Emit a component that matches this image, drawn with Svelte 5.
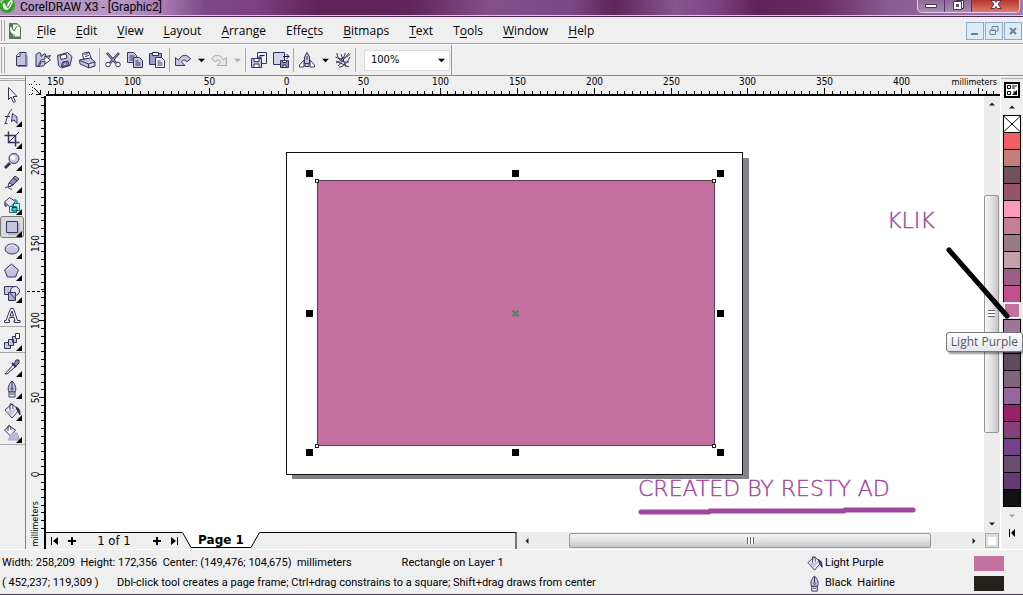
<script lang="ts">
	// all icons are drawn on an 18x18 grid; fill and stroke come from .icon
	const icons: Record<string, string> = {
		new: '<path d="M4.500 4.500 8 1.500h6v13h-9.500z"/><path d="M8 1.500v4H4.500" fill="#fff"/><path d="M6 15.500h9v-11" fill="none" stroke="#77779c"/>',
		open: '<path d="M2 15.500V3.500l3-2 2 1v3l4-3 1 3 4.500-1-7 10.500z"/><path d="m4 15 3-6 4-1V5l5.500 4-5.500 4v-3l-4 1-2 5z" fill="#fff"/>',
		save: '<path d="m1.500 4.500 10-3 4.500 4-2 9-8.500 2.500-3-2.500z"/><path d="m4 4.500 1 4 6-1.500-1-4z" fill="#fff"/><path d="m5.500 15.500 1-4.500 5.500-1 1 4.500z" fill="#77779c"/><path d="M9 12.500v1.500" stroke="#fff"/>',
		print: '<path d="m5.500 8-1-5.500L11 1l2.500 7z" fill="#fff"/><path d="m1.500 9 11-2 4.500 4v4l-6 2-9-4z"/><path d="m2 9.500 8.500 3.500 6-2M10.500 13v4" fill="none"/><path d="m6.500 3.500 4-1m-3.500 3 4-1" fill="none"/><path d="m12 14 3-1" stroke="#fff"/>',
		cut: '<path d="m3 2 9 10M15 2 6 12" fill="none" stroke-width="2.600"/><path d="m3.500 2.500 8 9M14.500 2.500l-8 9" fill="none" stroke="#dcdcf0" stroke-width=".7"/><circle cx="4" cy="13.500" r="2.300" fill="#fff"/><circle cx="14" cy="13.500" r="2.300" fill="#fff"/>',
		copy: '<path d="M1.500 1.500h6l3 3v7h-9z"/><path d="M3.500 5h5m-5 2h5m-5 2h5"/><path d="M7.500 6.500h6l3 3v7h-9z"/><path d="M9.500 10h3m-3 2h5m-5 2h5"/>',
		paste: '<path d="M1.500 2.500h12v11h-12z" fill="#9c9cc6"/><path d="M4.500 1.500h6v3h-6z" fill="#fff"/><path d="M7.500 6.500h6l3 3v7h-9z" fill="#f1f1fb"/><path d="M9.500 10h3m-3 2h5m-5 2h5"/>',
		undo: '<path d="M1.500 14.500V6.500l3 2.500c3-6 9-6 12-1l-4 3c-1-3-4-2-5 0l3.500 3.500z"/>',
		redo: '<path d="M16.500 14.500V6.500l-3 2.500c-3-6-9-6-12-1l4 3c1-3 4-2 5 0L7 14.500z" fill="#e6e6e6" stroke="#aaa"/>',
		import: '<path d="M7.500 1.500h9v11h-9z" fill="#f1f1fb"/><path d="M1.500 7.500h10v9h-10z"/><path d="M4 7.500h5v3H4zM4 13h5v3.500H4z" fill="#fff"/><path d="M14.500 4.500H10v2.500M8 5.500l2 2 2-2" fill="none" stroke="#171733"/>',
		export: '<path d="M1.500 1.500h11v12h-11z" fill="#d4d4ec"/><path d="M8.500 9.500h8v7h-8z" fill="#8f8fb8"/><path d="M10.500 9.500h4v2h-4zM11 14h3v2.500h-3z" fill="#fff"/><path d="M11 5.500h6M14.500 3l2.500 2.500L14.500 8" fill="none" stroke="#171733"/>',
		launch: '<path d="M6.500 12.500V6L9 1.500 11.500 6v6.500z"/><path d="m6 9-4.500 5v2H6zm6 0 4.500 5v2H12z" fill="#fff"/><path d="M7 12.500h4v3H7zM9 5v4"/>',
		online: '<path d="M3 2c0 6 5 10 12 9M1.500 6c5 3 9 2 15-3M2 12c5-2 9-6 9-10M5 16c5 0 8-4 11-10M2 10l13 6M7 3l5 13M15 2 4 15" fill="none"/>',
		pick: '<path d="M5.500 1.500v12l2.500-2.500 2.500 5.500 2-1-2.500-5h4z" fill="#f1f1fb"/>',
		shape: '<path d="M9 1C6 4 4 9 2.500 15" fill="none"/><path d="M2 8.500h5m-5.500 7h3" fill="none"/><path d="m9.500 5.500-1 8 2.500-1.500 3 3.500V9z"/>',
		crop: '<path d="M5.500 1.500v11h11M1.500 5.500h11v11" fill="none" stroke-width="1.500"/><path d="M16 2 5 13" fill="none"/>',
		zoom: '<path d="m7 11-5 5" stroke-width="3"/><circle cx="11" cy="6.500" r="5"/><circle cx="10" cy="5.500" r="2.500" fill="#fff" stroke="none"/>',
		freehand: '<path d="m6 9 6-7 4 3-6 6-4 2z" fill="#8f8fb8"/><path d="m6 9 4 2-5 2zM2 14c3-3 4 2 7 1" fill="#fff"/><path d="m10 4 4 3" fill="none"/>',
		smart: '<path d="m1.500 6 5-4.500 6 4-5 6z" fill="#e4e4f2"/><path d="M2 7c-1 3 1 5 2 2" fill="#77779c"/><path d="M11 4c2 0 3 1 3 3" fill="none" stroke="#15a9b0" stroke-width="2"/><path d="M6.500 10.500h7v6h-7zM10.500 7.500h6v7h-6z" fill="#c5f3f2" stroke="#087b82"/><path d="M9 11.500h5v3.500H9z" fill="#15d7e0" stroke="#333"/>',
		rectangle: '<path d="M3.500 3.500h11v11h-11z"/><path d="M16 5v11H5" fill="none" stroke="#9999aa"/>',
		ellipse: '<ellipse cx="9" cy="9" rx="7" ry="5"/><path d="M4 8c2-4 8-4 9 0" fill="none" stroke="#fff"/>',
		polygon: '<path d="m8.500 2 7 6-3 7h-8l-3-7z"/><path d="m3.500 8 5-4" stroke="#fff"/>',
		shapes: '<path d="M1.500 2.500h9v8h-9z"/><circle cx="12" cy="7" r="4.500" fill="#e6e6f5"/><path d="M5.500 8.500h7v8h-7z" fill="#b0b1d1"/><path d="m6 8 7 8" fill="none"/>',
		text: '<path d="M7.500 2.500h3l4 12H17v2h-6v-2h1l-1-3H6.500l-1 3h1v2h-5v-2H3zM9 5l-2 5h3.500z" fill="#f4f4fb" fill-rule="evenodd"/>',
		blend: '<path d="M1.500 10.500h6v6h-6z"/><path d="M5.500 7.500h5v6h-5zM9.500 4.500h4v6h-4z"/><path d="M12.500 1.500h4v5h-4z" fill="#fff"/>',
		eyedropper: '<path d="m2 16 8-9 2 2-8 7z" fill="#f1f1fb"/><path d="m9 5 4 4" stroke-width="2"/><path d="m11 6 2-4h3v3l-3 3z" fill="#8585b0"/>',
		outline: '<path d="M6 12C4 8 6 4 9 1c3 3 5 7 3 11z"/><path d="M9 2v7m-3 3h6v5H6zm1 2h4" fill="#f1f1fb"/><circle cx="9" cy="9" r="1" fill="#fff"/>',
		fill: '<path d="m2 8 7-6 7 6-7 8z" fill="#f1f1fb"/><path d="m3 9 11-2-6 7z" stroke="none"/><path d="M7 8V2c2-1 3 1 3 5" fill="none"/><path d="M13 5c4 1 4 5 4 8l-3-5z" fill="#35345c"/>',
		interactive: '<path d="m1.500 6 5-4 6 4-5 6z" fill="#f1f1fb"/><path d="M5 7V2c2-2 3 1 3 4" fill="none"/><path d="m5 16 4-7h5l3 7z" fill="#b9b9df" stroke="#a5a5cc"/>'
	};

	// [before, access key, after]
	const menus = [
		['', 'F', 'ile'],
		['', 'E', 'dit'],
		['', 'V', 'iew'],
		['', 'L', 'ayout'],
		['', 'A', 'rrange'],
		['Effe', 'c', 'ts'],
		['', 'B', 'itmaps'],
		['', 'T', 'ext'],
		['T', 'o', 'ols'],
		['', 'W', 'indow'],
		['', 'H', 'elp']
	];

	const toolbar = [
		['new', 'open', 'save', 'print'],
		['cut', 'copy', 'paste'],
		['undo', 'caret', 'redo', 'caret-off'],
		['import', 'export'],
		['launch', 'caret', 'online']
	];

	const toolbox = [
		['pick', 'shape', 'crop', 'zoom', 'freehand', 'smart', 'rectangle', 'ellipse', 'polygon', 'shapes', 'text'],
		['blend'],
		['eyedropper', 'outline', 'fill', 'interactive']
	];

	const palette = [
		'#f05f62', '#c47f7b', '#74505c', '#98536b', '#fd9abb', '#c67d98', '#957c86', '#c59fab',
		'#9d5e86', '#c44f8c', '#c36f9f', '#9d7798', '#7b5f79', '#5f4c5e', '#80667c', '#98659f',
		'#9a206c', '#85407a', '#76418c', '#694d6d', '#623a75', '#121215'
	];

	// ruler: one tick per 5 mm, labels every 50 mm
	const TICK = 7.69;
	const hTicks = Array.from({ length: 200 }, (_, i) => i - 31);
	const vTicks = Array.from({ length: 60 }, (_, i) => i - 7);
	const hOrigin = 240;
	const vOrigin = 378;

	let tool = $state('rectangle');
	let color = $state(10);
</script>

{#snippet icon(name: string)}
	<svg class="icon" viewBox="0 0 18 18" aria-hidden="true">{@html icons[name]}</svg>
{/snippet}

{#snippet arrow(dir: string)}
	<svg class="arrow {dir}" viewBox="0 0 8 8" aria-hidden="true"><path d="M0 6h8L4 2z" /></svg>
{/snippet}

<div class="app">
	<header class="title">
		<svg class="logo" viewBox="0 0 18 15" aria-hidden="true">
			<circle cx="7" cy="5" r="8" fill="#39a02c" />
			<path d="M1 3a6 6 0 0 1 11-2" fill="none" stroke="#a5dc87" stroke-width="2" />
			<path d="M3 3c2 0 3 2 4 4 0-3 1-5 4-7l2 2c-2 3-2 6-6 8-3 0-5-3-4-7z" fill="#fff" />
			<path d="m5 4 3 4 3-6" fill="none" stroke="#39962c" />
		</svg>
		<h1>CorelDRAW X3 - [Graphic2]</h1>
		<div class="window-buttons">
			<button aria-label="Minimize"><svg viewBox="0 0 14 12"><path d="M1.500 4.500h11v3h-11z" /></svg></button>
			<button aria-label="Restore"><svg viewBox="0 0 14 12"><path d="M4.500.5h8v8h-2" /><path d="M2.500 1.500h8v8h-8zM5.500 4.500h2v2h-2z" fill-rule="evenodd" /></svg></button>
			<button class="close" aria-label="Close"><svg viewBox="0 0 14 12"><path d="M2 .5h3.500L7 2.500 8.500.5H12L9 4l3 4.500H8.500L7 6.500l-1.500 2H2L5 4z" /></svg></button>
		</div>
	</header>

	<nav class="menu" aria-label="Main menu">
		<span class="grip"></span>
		<svg class="doc" viewBox="0 0 14 18" aria-hidden="true">
			<path d="M1 1h8l4 4v12H1z" fill="#4f7f4a" />
			<path d="M5 2.500h4l3 3v9H5z" fill="#f7fbf2" />
			<path d="M2 5c2 0 2 2 3 3 0-2 1-4 3-5l2 2c-2 3-2 5-3 7-3 1-5-2-5-7z" fill="#fff" />
			<path d="m4 6 2 3 3-5M6 12v3" fill="none" stroke="#4f7f4a" />
		</svg>
		{#each menus as [before, key, after]}
			<button class="menu-item">{before}<u>{key}</u>{after}</button>
		{/each}
		<div class="mdi">
			<button aria-label="Minimize document"><svg viewBox="0 0 16 16"><path d="M4 11h7" stroke-width="2" /></svg></button>
			<button aria-label="Restore document"><svg viewBox="0 0 16 16"><path d="M6 6V3.500h6V8h-2M6 3.500h6M4 7.500h5.500v4H4zM4 7h5.500" /></svg></button>
			<button aria-label="Close document"><svg viewBox="0 0 16 16"><path d="m5 5 6 6m0-6-6 6" stroke-width="2" /></svg></button>
		</div>
	</nav>

	<div class="toolbar" role="toolbar" aria-label="Standard">
		<span class="grip"></span>
		{#each toolbar as group}
			<div class="group">
				{#each group as name}
					{#if name.startsWith('caret')}
						<button class="caret" class:off={name === 'caret-off'} aria-label="More">{@render arrow('down')}</button>
					{:else}
						<button class="tool" aria-label={name}>{@render icon(name)}</button>
					{/if}
				{/each}
			</div>
		{/each}
		<label class="zoom">
			<select aria-label="Zoom level">
				<option>100%</option>
				<option>200%</option>
			</select>
			{@render arrow('down')}
		</label>
	</div>

	<main>
		<aside class="toolbox" aria-label="Toolbox">
			{#each toolbox as group}
				<div class="tools">
					{#each group as name}
						<button class="tool" class:active={tool === name} class:flyout={name !== 'pick' && name !== 'text'} aria-label={name} onclick={() => (tool = name)}>
							{@render icon(name)}
						</button>
					{/each}
				</div>
			{/each}
		</aside>

		<section class="document" aria-label="Graphic2">
			<svg class="corner" aria-hidden="true">
				<path d="M6 11v1m0 2v1m0 2v1M10 8h1m2 0h1m-6 4 6 6m0-4v4h-4M3 8h1m1 0h1M3 18h1m1 0h1M8 5v1" />
			</svg>
			<svg class="ruler-h">
				{#each hTicks as t}
					{@const x = Math.round(hOrigin + t * TICK) + 0.5}
					<path d="M{x} {t % 10 === 0 ? 12 : 15}V18" />
					{#if t % 10 === 0 && t < 90}
						<text {x} y="9">{Math.abs(t * 5)}</text>
					{/if}
				{/each}
				<path d="M936 5v12" stroke-dasharray="2 2" />
			</svg>
			<span class="unit-h">millimeters</span>
			<svg class="ruler-v">
				{#each vTicks as t}
					{@const y = Math.round(vOrigin - t * TICK) + 0.5}
					<path d="M{t % 10 === 0 ? 13 : 15} {y}H19" />
					{#if t % 10 === 0 && t < 50}
						<text transform="translate(13 {y}) rotate(-90)">{Math.abs(t * 5)}</text>
					{/if}
				{/each}
				<path d="M1 195.500h18" stroke-dasharray="3 2" />
			</svg>
			<span class="unit-v">millimeters</span>

			<svg class="canvas" role="img" aria-label="Page with a light purple rectangle">
				<rect x="246" y="62" width="457" height="321" fill="#808489" />
				<rect x="240.500" y="56.500" width="456" height="322" fill="#fff" stroke="#111" />
				<rect x="271.500" y="84.500" width="397" height="265" fill={palette[10]} stroke="#5b3f50" />
				{#each [271, 668] as x}
					{#each [84, 349] as y}
						<rect x={x - 1.5} y={y - 0.5} width="3" height="3" fill="#fff" stroke="#222" />
					{/each}
				{/each}
				{#each [260, 466, 671] as x}
					{#each [74, 214, 353] as y}
						{#if x !== 466 || y !== 214}
							<rect {x} {y} width="7" height="7" />
						{/if}
					{/each}
				{/each}
				<path d="m466.500 214.500 6 6m0-6-6 6" stroke="#3d8b63" stroke-width="2" />
				<text x="592" y="400">CREATED BY RESTY AD</text>
				<path class="underline" d="M595 416h68l1-1h134l1-1h68" />
			</svg>

			<div class="scroll vertical">
				<button aria-label="Scroll up">{@render arrow('up')}</button>
				<span class="thumb"></span>
				<button aria-label="Scroll down">{@render arrow('down')}</button>
			</div>

			<div class="bottom">
				<div class="pages">
					<button aria-label="First page"><svg viewBox="0 0 10 10"><path d="M1 1h1v8H1zM8 1v8L3 5z" /></svg></button>
					<button aria-label="Add page before"><svg viewBox="0 0 10 10"><path d="M4 1h2v3h3v2H6v3H4V6H1V4h3z" /></svg></button>
					<span class="count">1 of 1</span>
					<button aria-label="Add page after"><svg viewBox="0 0 10 10"><path d="M4 1h2v3h3v2H6v3H4V6H1V4h3z" /></svg></button>
					<button aria-label="Last page"><svg viewBox="0 0 10 10"><path d="M8 1h1v8H8zM2 1v8l5-4z" /></svg></button>
					<button class="tab">
						<svg viewBox="0 0 78 17" aria-hidden="true"><path d="M0 0h78v1h-1l-8 14.500H9L1 1H0z" fill="#fff" stroke="none" /><path d="M.5.5 9 15.500h60L77.500.5" fill="none" stroke="#000" /></svg>
						<span>Page 1</span>
					</button>
				</div>
				<div class="scroll horizontal">
					<button aria-label="Scroll left">{@render arrow('left')}</button>
					<span class="thumb"></span>
					<button aria-label="Scroll right">{@render arrow('right')}</button>
				</div>
			</div>
			<button class="navigator" aria-label="Navigator"></button>
		</section>

		<aside class="palette" aria-label="Color palette">
			<button class="palette-menu" aria-label="Palette options">
				<svg viewBox="0 0 16 16"><path d="M1 1h14v14H1z" fill="#fff" stroke-width="2" /><path d="M3.500 3.500h3v3h-3zM3.500 9.500h3v3h-3zM8 4h5M8 6h3M9 10h3" fill="none" /><path d="M13 8v5H8z" fill="#000" stroke="none" /></svg>
			</button>
			<button class="step" aria-label="Palette up">{@render arrow('up')}</button>
			<div class="swatches">
				<button class="none" aria-label="No color"><svg viewBox="0 0 17 16"><path d="m0 0 17 16M17 0 0 16" /></svg></button>
				{#each palette as c, i}
					<button class:picked={color === i} style:background={c} aria-label={c} onclick={() => (color = i)}></button>
				{/each}
			</div>
			<button class="step off" aria-label="Palette down">{@render arrow('down')}</button>
			<button class="step" aria-label="Expand palette"><svg viewBox="0 0 8 8"><path d="M1 0h1v8H1zM7 0v8L3 4z" /></svg></button>
		</aside>

		<svg class="pointer" viewBox="0 0 140 120" aria-hidden="true">
			<text x="2" y="25">KLIK</text>
			<path d="m64 47 58 66" />
		</svg>
		<span class="tooltip" role="tooltip">Light Purple</span>
	</main>

	<footer>
		<div class="info">
			<div class="line">
				<span class="pre">Width: 258,209  Height: 172,356  Center: (149,476; 104,675)  millimeters</span>
				<span class="object">Rectangle on Layer 1</span>
			</div>
			<div class="line">
				<span class="coords">( 452,237; 119,309 )</span>
				<span>Dbl-click tool creates a page frame; Ctrl+drag constrains to a square; Shift+drag draws from center</span>
			</div>
		</div>
		<div class="paint">
			<div class="line">{@render icon('fill')}<span>Light Purple</span><i class="chip pink"></i></div>
			<div class="line">{@render icon('outline')}<span class="pre">Black  Hairline</span><i class="chip black"></i></div>
		</div>
	</footer>
</div>

<style>
	:global(body) {
		background: #efefef;
	}

	.app {
		display: flex;
		flex-direction: column;
		min-height: 100vh;
		background: #efefef;
		color: #000;
		font: 11px/20px Roboto, sans-serif;
		overflow: hidden;
	}

	button {
		display: grid;
		place-items: center;
		padding: 0;
		border: 0;
		background: none;
		color: inherit;
		font: inherit;
	}

	svg {
		display: block;
	}

	.icon {
		width: 18px;
		height: 18px;
		fill: #c3c4e2;
		stroke: #35345c;
	}

	.arrow {
		width: 8px;
		height: 8px;
		fill: #222;
	}

	.arrow.down {
		transform: rotate(180deg);
	}

	.arrow.left {
		transform: rotate(-90deg);
	}

	.arrow.right {
		transform: rotate(90deg);
	}

	.title {
		display: flex;
		height: 15px;
		border-bottom: 1px solid #d9c6df;
		box-shadow: 0 1px #4a2350;
		margin-bottom: 2px;
		background: linear-gradient(90deg, #b493c0, #b796c3 12%, #a67bb2 16%, #7d4886 20%, #7c4183 25%, #602257 31%, #602459 40%, #84508c 48%, #7b4684 56%, #5d2558 60%, #885590 66%, #7c4483 70%, #5f2159 74%, #682a61 80%, #8b5c95 87%, #a17bae 100%);
	}

	.logo {
		width: 18px;
		height: 15px;
	}

	h1 {
		margin: 0 auto 0 2px;
		font: 12px/14px Roboto, sans-serif;
	}

	.window-buttons {
		display: flex;
		height: 12px;
		margin-right: 3px;
		border: 1px solid #e0cfe6;
		border-top: 0;
		border-radius: 0 0 5px 5px;
		background: linear-gradient(#8d6a98, #a98ab3);
		overflow: hidden;
	}

	.window-buttons button {
		width: 27px;
		border-right: 1px solid #57345f;
	}

	.window-buttons .close {
		width: 47px;
		border: 0;
		background: linear-gradient(#b2362f, #e0796a);
	}

	.window-buttons svg {
		width: 14px;
		height: 12px;
		fill: #fff;
		stroke: #4c3553;
	}

	.menu {
		display: flex;
		align-items: center;
		height: 25px;
		border-bottom: 1px solid #a0a0a0;
		font: 12px/18px 'Open Sans', sans-serif;
	}

	.grip {
		align-self: stretch;
		width: 2px;
		margin: 2px 3px 2px 1px;
		border: solid #a5a5a5;
		border-width: 0 1px;
	}

	.doc {
		width: 14px;
		height: 18px;
		margin-right: 5px;
	}

	.menu-item {
		display: block;
		padding: 0 10px;
	}

	u {
		text-underline-offset: 2px;
	}

	.mdi {
		display: flex;
		gap: 1px;
		margin-left: auto;
		padding-right: 1px;
	}

	.mdi button {
		border: 1px solid #8fabc5;
		background: #dcebf8;
	}

	.mdi svg {
		width: 16px;
		height: 16px;
		fill: none;
		stroke: #6d8096;
	}

	.toolbar {
		display: flex;
		align-items: center;
		height: 30px;
		border-top: 1px solid #fff;
		border-bottom: 1px solid #8a8a8a;
	}

	.group {
		display: flex;
		align-items: center;
		height: 24px;
		padding: 0 1px 0 2px;
		border-right: 1px solid #aaa;
	}

	.toolbar .tool {
		width: 22px;
		height: 22px;
	}

	.caret {
		width: 14px;
		height: 22px;
	}

	.caret .arrow,
	.zoom .arrow {
		width: 7px;
		height: 7px;
		fill: #000;
	}

	.caret.off .arrow {
		fill: #aaa;
	}

	.zoom {
		display: flex;
		align-items: center;
		align-self: stretch;
		padding: 0 1px 0 8px;
		border-right: 1px solid #999;
	}

	select {
		width: 86px;
		height: 21px;
		margin-right: -12px;
		padding: 0 6px;
		border: 1px solid #dcdcdc;
		background: #fff;
		color: #000;
		font: 11px/18px 'DejaVu Sans Condensed', sans-serif;
		appearance: none;
	}

	.zoom .arrow {
		margin-right: 5px;
		pointer-events: none;
	}

	main {
		position: relative;
		display: grid;
		grid-template-columns: 26px 1fr 23px;
		flex: 1;
	}

	.toolbox {
		padding-top: 8px;
		border-right: 1px solid #808080;
		background: linear-gradient(#fff, #fff) 0 1px / 100% 1px no-repeat, linear-gradient(#aaa, #aaa) 0 2px / 100% 1px no-repeat, linear-gradient(#aaa, #aaa) 0 4px / 100% 1px no-repeat;
	}

	.tools {
		margin-bottom: 3px;
		border-bottom: 1px solid #aaa;
	}

	.toolbox .tool {
		position: relative;
		width: 24px;
		height: 22px;
		border: 1px solid transparent;
		border-radius: 3px;
	}

	.toolbox .active {
		border-color: #777;
		background: #dadada;
	}

	.flyout::after {
		content: '';
		position: absolute;
		right: 1px;
		bottom: 0;
		border: 3px solid;
		border-color: transparent #000 #000 transparent;
	}

	.document {
		position: relative;
		display: grid;
		grid-template-columns: 20px 1fr 16px;
		grid-template-rows: 20px 1fr 17px;
		min-width: 0;
	}

	.corner,
	.ruler-h,
	.ruler-v,
	.canvas {
		width: 100%;
		height: 100%;
		overflow: hidden;
	}

	.corner,
	.ruler-h,
	.ruler-v {
		fill: none;
		stroke: #000;
		shape-rendering: crispEdges;
	}

	.ruler-h {
		grid-column: 2 / 4;
		border-bottom: 2px solid #000;
		box-sizing: border-box;
	}

	.ruler-h text,
	.ruler-v text {
		fill: #000;
		stroke: none;
		font: 10px 'DejaVu Sans Condensed', sans-serif;
		text-anchor: middle;
	}

	.ruler-v {
		grid-area: 2 / 1 / 4 / 2;
		border-right: 2px solid #000;
		box-sizing: border-box;
		min-height: 0;
	}

	.unit-h,
	.unit-v {
		position: absolute;
		background: #efefef;
		font: 9px/11px 'DejaVu Sans Condensed', sans-serif;
	}

	.unit-h {
		top: 1px;
		right: 3px;
	}

	.unit-v {
		bottom: 3px;
		left: 4px;
		writing-mode: vertical-rl;
		transform: rotate(180deg);
	}

	.canvas {
		grid-area: 2 / 2;
		background: #fff;
	}

	.canvas text,
	.pointer text {
		fill: #9f479d;
		stroke: #9f479d;
		stroke-width: 0.4px;
		font: 200 22px 'DejaVu Sans', sans-serif;
	}

	.underline {
		fill: none;
		stroke: #9f479d;
		stroke-width: 5;
		stroke-linecap: round;
	}

	.scroll {
		display: grid;
		background: #ececec;
	}

	.vertical {
		grid-area: 2 / 3;
		grid-template-rows: 16px 83fr 237fr 83fr 16px;
		justify-items: stretch;
	}

	.horizontal {
		flex: 1;
		grid-template-columns: 20px 32fr 362fr 33fr 20px;
	}

	.thumb {
		display: grid;
		place-items: center;
		box-sizing: border-box;
		border: 1px solid #979797;
		border-radius: 2px;
	}

	.thumb::before {
		content: '';
		width: 7px;
		height: 7px;
	}

	.vertical .thumb {
		grid-row: 3;
		margin-right: 1px;
		background: linear-gradient(90deg, #f6f6f6, #e2e2e4 50%, #c4c5c9);
	}

	.vertical .thumb::before {
		background: repeating-linear-gradient(#666 0 1px, #fff 1px 3px);
	}

	.vertical button:last-child {
		grid-row: 5;
	}

	.horizontal .thumb {
		grid-column: 3;
		margin: 1px 0;
		background: linear-gradient(#f6f6f6, #e2e2e4 50%, #c4c5c9);
	}

	.horizontal .thumb::before {
		background: repeating-linear-gradient(90deg, #666 0 1px, #fff 1px 3px);
	}

	.horizontal button:last-child {
		grid-column: 5;
	}

	.scroll .arrow,
	.step .arrow {
		width: 6px;
		height: 6px;
	}

	.bottom {
		grid-area: 3 / 2;
		display: flex;
		min-width: 0;
	}

	.pages {
		display: flex;
		align-items: center;
		flex: 0 0 50%;
		border-top: 1px solid #000;
		border-right: 2px solid #777;
	}

	.pages button {
		width: 17px;
		height: 16px;
	}

	.pages button svg {
		width: 10px;
		height: 10px;
	}

	.count {
		width: 68px;
		font: 13px/16px 'DejaVu Sans Condensed', sans-serif;
		text-align: center;
	}

	.pages .tab {
		width: 78px;
		height: 17px;
		margin: -1px 0 0;
	}

	.tab svg,
	.tab span {
		grid-area: 1 / 1;
	}

	.pages .tab svg {
		width: 78px;
		height: 17px;
	}

	.tab span {
		font: bold 12px/15px 'DejaVu Sans', sans-serif;
	}

	.navigator {
		margin: 1px;
		border: 1px solid #aaa;
		background: linear-gradient(#fff, #fff) center / 8px 8px no-repeat #dedede;
	}

	.palette {
		display: flex;
		flex-direction: column;
		align-items: center;
		padding-top: 6px;
		border-left: 1px solid #fff;
		background: linear-gradient(#aaa, #aaa) 0 2px / 100% 1px no-repeat;
	}

	.palette-menu svg {
		width: 16px;
		height: 16px;
		stroke: #000;
	}

	.step {
		width: 17px;
		height: 17px;
	}

	.step svg {
		width: 8px;
		height: 8px;
	}

	.step.off {
		opacity: 0.4;
	}

	.swatches {
		width: 18px;
		border-bottom: 1px solid #000;
	}

	.swatches button {
		box-sizing: border-box;
		width: 18px;
		height: 17px;
		border: 1px solid #000;
		border-bottom: 0;
	}

	.swatches .none {
		background: #fff;
	}

	.none svg {
		width: 16px;
		height: 16px;
		stroke: #000;
	}

	.swatches .picked {
		border: 2px solid #fff;
		outline: 1px solid #ddd;
		outline-offset: -1px;
	}

	/* call-out lying over the scroll bar and the palette */
	.pointer {
		position: absolute;
		top: 127px;
		right: -2px;
		width: 140px;
		height: 120px;
		pointer-events: none;
	}

	.pointer path {
		stroke: #000;
		stroke-width: 5;
		stroke-linecap: round;
	}

	.tooltip {
		position: absolute;
		top: 256px;
		right: 0;
		padding: 0 4px;
		border: 1px solid #767676;
		border-radius: 3px;
		background: linear-gradient(#fff, #e4e5f0);
		box-shadow: 2px 2px 2px rgba(0, 0, 0, 0.4);
		color: #575757;
		font: 12px/18px 'Open Sans', sans-serif;
	}

	footer {
		display: flex;
		justify-content: space-between;
		padding: 3px 19px 1px 2px;
		border-top: 1px solid #fff;
		border-bottom: 1px solid #45305c;
	}

	.line {
		display: flex;
		align-items: center;
		height: 20px;
		white-space: nowrap;
	}

	.pre {
		white-space: pre;
	}

	.object {
		margin-left: 50px;
	}

	.coords {
		width: 115px;
	}

	.paint {
		width: 198px;
	}

	.paint .icon {
		width: 17px;
		height: 17px;
		margin-right: 2px;
	}

	.chip {
		width: 30px;
		height: 15px;
		margin-left: auto;
	}

	.pink {
		background: #c36f9f;
	}

	.black {
		background: #24201c;
	}
</style>
